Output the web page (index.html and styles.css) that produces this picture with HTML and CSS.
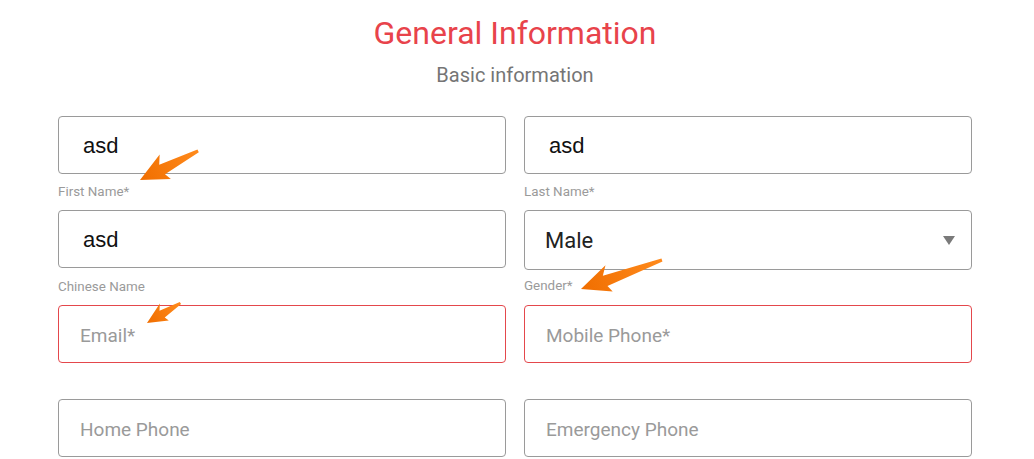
FILE: index.html
```html
<!DOCTYPE html>
<html>
<head>
<meta charset="utf-8">
<link rel="stylesheet" href="styles.css">
</head>
<body>
<div class="page">
  <h1 class="title">General Information</h1>
  <p class="subtitle">Basic information</p>
  <div class="grid">
    <div class="field">
      <div class="box"><span class="value">asd</span></div>
      <div class="label">First Name*</div>
    </div>
    <div class="field">
      <div class="box"><span class="value">asd</span></div>
      <div class="label">Last Name*</div>
    </div>
    <div class="field field-row2">
      <div class="box"><span class="value">asd</span></div>
      <div class="label">Chinese Name</div>
    </div>
    <div class="field">
      <div class="box select"><span class="select-value">Male</span><span class="caret"></span></div>
      <div class="label label-select">Gender*</div>
    </div>
    <div class="field">
      <div class="box error"><span class="placeholder">Email*</span></div>
    </div>
    <div class="field">
      <div class="box error"><span class="placeholder">Mobile Phone*</span></div>
    </div>
    <div class="field">
      <div class="box"><span class="placeholder">Home Phone</span></div>
    </div>
    <div class="field">
      <div class="box"><span class="placeholder">Emergency Phone</span></div>
    </div>
  </div>
  <svg class="arrows" width="1034" height="459" viewBox="0 0 1034 459">
    <defs>
      <linearGradient id="og" x1="0" y1="0" x2="1" y2="0">
        <stop offset="0" stop-color="#f06e00"/>
        <stop offset="1" stop-color="#ff8a1c"/>
      </linearGradient>
    </defs>
    <polygon fill="url(#og)" transform="translate(140,180) rotate(-26.6)" points="0,0 29,-14 24,-5 65,-1.5 65,1.5 25,6 28,13"/>
    <polygon fill="url(#og)" transform="translate(581,289) rotate(-19.7)" points="0,0 31,-14 25,-5 86,-1.5 86,1.5 26,6 29,13"/>
    <polygon fill="url(#og)" transform="translate(147,323) rotate(-31)" points="0,0 21,-10 17,-4 39,-1.2 39,1.2 18,4.5 20,9"/>
  </svg>
</div>
</body>
</html>
```
FILE: styles.css
```css
html, body {
  margin: 0;
  padding: 0;
  background: #ffffff;
}
.page {
  position: relative;
  width: 1034px;
  height: 459px;
  overflow: hidden;
  font-family: Roboto, "Noto Sans", sans-serif;
}
.title {
  margin: 15px 0 0 0;
  text-align: center;
  font-size: 32px;
  font-weight: 400;
  line-height: 37px;
  color: #e8434b;
  width: 1030px;
}
.subtitle {
  margin: 12px 0 0 0;
  text-align: center;
  font-size: 20px;
  line-height: 23px;
  color: #757575;
  width: 1030px;
}
.grid {
  margin: 29px 0 0 58px;
  width: 914px;
  display: grid;
  grid-template-columns: 448px 448px;
  grid-template-rows: 94px 95px 94px 94px;
  column-gap: 18px;
}
.field {
  display: flex;
  flex-direction: column;
}
.box {
  box-sizing: border-box;
  height: 58px;
  border: 1px solid #9a9a9a;
  border-radius: 4px;
  display: flex;
  align-items: center;
  padding: 0 21px;
  flex-shrink: 0;
}
.box.error {
  border-color: #e4474c;
}
.box.select {
  height: 60px;
  padding: 0 15px 0 20px;
  justify-content: space-between;
}
.value {
  font-family: "Liberation Sans", Arial, sans-serif;
  font-size: 22px;
  color: #111111;
  padding-left: 3px;
  padding-top: 1px;
}
.select-value {
  font-size: 22px;
  color: #222222;
  padding-top: 1px;
}
.caret {
  width: 0;
  height: 0;
  border-left: 6px solid transparent;
  border-right: 6px solid transparent;
  border-top: 9px solid #7a7a7a;
  margin-right: 1px;
}
.placeholder {
  font-size: 19px;
  color: #9a9a9a;
  padding-top: 2px;
}
.label {
  margin-top: 10px;
  font-size: 13.4px;
  line-height: 15px;
  color: #9a9a9a;
}
.field-row2 .label {
  margin-top: 11px;
}
.label.label-select {
  margin-top: 8px;
}
.arrows {
  position: absolute;
  top: 0;
  left: 0;
  pointer-events: none;
}
```
